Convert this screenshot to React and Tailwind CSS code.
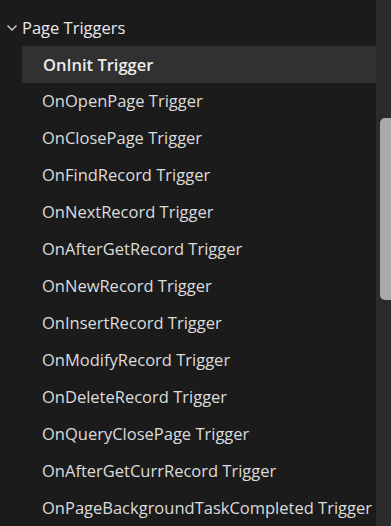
import React from "react";

const items = [
  "OnOpenPage Trigger",
  "OnClosePage Trigger",
  "OnFindRecord Trigger",
  "OnNextRecord Trigger",
  "OnAfterGetRecord Trigger",
  "OnNewRecord Trigger",
  "OnInsertRecord Trigger",
  "OnModifyRecord Trigger",
  "OnDeleteRecord Trigger",
  "OnQueryClosePage Trigger",
  "OnAfterGetCurrRecord Trigger",
  "OnPageBackgroundTaskCompleted Trigger",
];

export default function App() {
  return (
    <div
      className="w-[391px] h-[526px] bg-[#1b1b1b] flex overflow-hidden"
      style={{ fontFamily: '"Open Sans", "Noto Sans", sans-serif' }}
    >
      <div className="flex-1 flex flex-col pt-[9px]">
        <div className="h-[37px] flex items-center pt-[1px] text-[16.5px] text-[#e8e8e8]">
          <svg width="12" height="8" viewBox="0 0 12 8" className="ml-[6px] mr-[4px]">
            <path d="M1.5 1.5 L6 6 L10.5 1.5" stroke="#cfcfcf" strokeWidth="1.4" fill="none" />
          </svg>
          <span>Page Triggers</span>
        </div>
        <div className="ml-[22px] h-[37px] bg-[#313131] flex items-center pt-[1px] pl-[21px] text-[16.5px] font-semibold text-[#ececec]">
          OnInit Trigger
        </div>
        {items.map((t) => (
          <div
            key={t}
            className="ml-[22px] h-[37px] flex items-center pt-[1px] pl-[20px] text-[16.5px] text-[#dcdcdc] whitespace-nowrap"
          >
            {t}
          </div>
        ))}
      </div>
      <div className="w-[15px] bg-[#2b2b2b] flex flex-col pt-[118px]">
        <div className="ml-[4px] h-[182px] bg-[#a9a9a9] rounded-l-[5px]" />
      </div>
    </div>
  );
}
